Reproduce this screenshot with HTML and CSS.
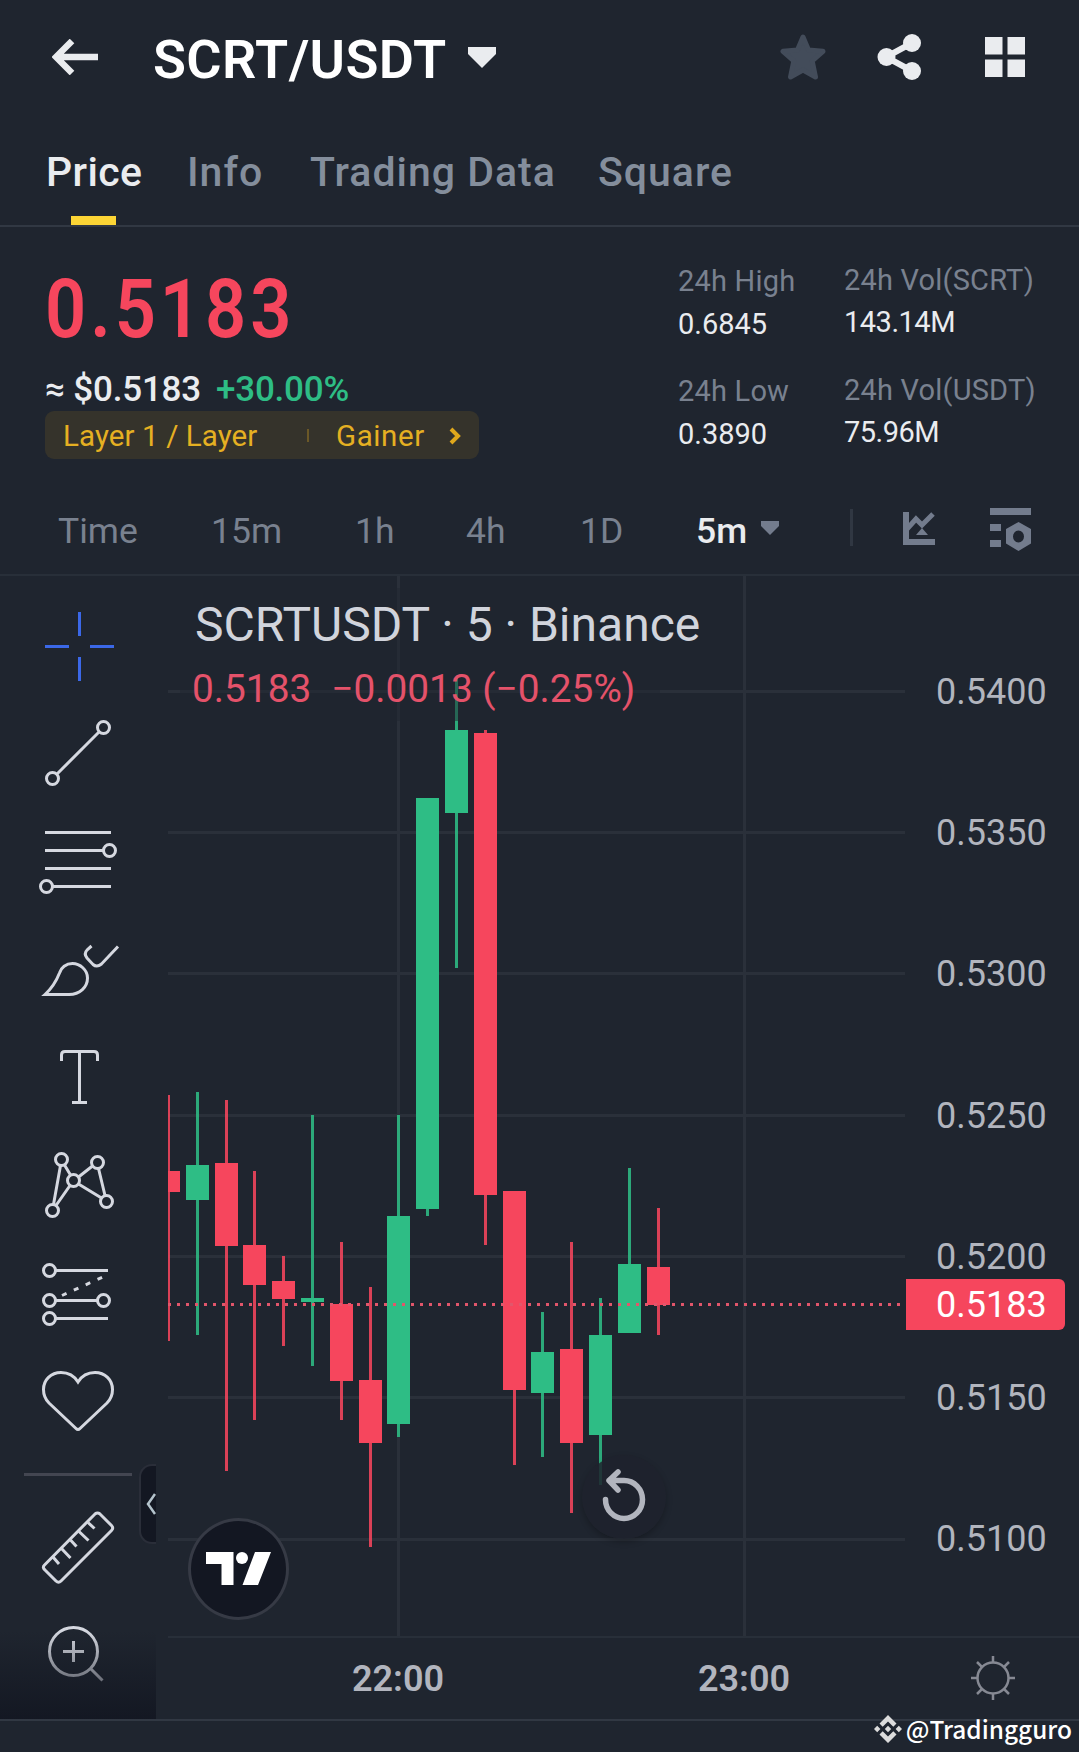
FILE: index.html
```html
<!DOCTYPE html>
<html lang="en">

<head>
    <meta charset="UTF-8">
    <meta name="viewport" content="width=device-width, initial-scale=1.0">
    <title>SCRT/USDT</title>
    <link rel="stylesheet" href="styles.css">
</head>

<body>
    <div class="app">
        <header class="header">
            <svg class="back" width="46" height="36" viewBox="0 0 46 36">
                <path d="M20 2L4 18L20 34M4 18H46" fill="none" stroke="#eaecef" stroke-width="6.5" />
            </svg>
            <h1 class="pair">SCRT/USDT</h1>
            <svg class="pair-caret" width="28" height="21" viewBox="0 0 28 21">
                <path d="M0 0H28V7L14 21L0 7Z" fill="#eaecef" />
            </svg>
            <div class="header-icons">
                <svg width="46" height="46" viewBox="0 0 46 46">
                    <path d="M23 3L28.5 16L43 17.3L32.2 27L35.5 43L23 36L10.5 43L13.8 27L3 17.3L17.5 16Z" fill="#434c5a"
                        stroke="#434c5a" stroke-width="5" stroke-linejoin="round" />
                </svg>
                <svg class="share" width="44" height="48" viewBox="0 0 44 48">
                    <path d="M35 10L9 24L35 38" fill="none" stroke="#eaecef" stroke-width="6" />
                    <circle cx="35" cy="10" r="9" fill="#eaecef" />
                    <circle cx="9.5" cy="24" r="9" fill="#eaecef" />
                    <circle cx="35" cy="38" r="9" fill="#eaecef" />
                </svg>
                <svg class="apps" width="40" height="40" viewBox="0 0 40 40">
                    <path d="M0 0H17.5V17.5H0ZM22.5 0H40V17.5H22.5ZM0 22.5H17.5V40H0ZM22.5 22.5H40V40H22.5Z"
                        fill="#eaecef" />
                </svg>
            </div>
        </header>

        <nav class="tabs">
            <a class="tab active">Price</a>
            <a class="tab">Info</a>
            <a class="tab">Trading Data</a>
            <a class="tab">Square</a>
        </nav>

        <section class="summary">
            <div class="quote">
                <div class="last-price">0.5183</div>
                <div class="quote-row"><span>≈ $0.5183</span><span class="up">+30.00%</span></div>
                <div class="tags">
                    <span class="tag-layer">Layer 1 / Layer</span>
                    <i class="tag-line"></i>
                    <span class="tag-gainer">Gainer</span>
                    <svg width="12" height="18" viewBox="0 0 12 18">
                        <path d="M2 2L9 9L2 16" fill="none" stroke="#e0a81c" stroke-width="4" />
                    </svg>
                </div>
            </div>
            <dl class="stats">
                <dt>24h High</dt>
                <dd>0.6845</dd>
                <dt>24h Low</dt>
                <dd>0.3890</dd>
            </dl>
            <dl class="stats volume">
                <dt>24h Vol(SCRT)</dt>
                <dd>143.14M</dd>
                <dt>24h Vol(USDT)</dt>
                <dd>75.96M</dd>
            </dl>
        </section>

        <div class="intervals">
            <span>Time</span>
            <span>15m</span>
            <span>1h</span>
            <span>4h</span>
            <span>1D</span>
            <span class="selected">5m</span>
            <svg class="interval-caret" width="18" height="14" viewBox="0 0 18 14">
                <path d="M0 0H18V5L9 14L0 5Z" fill="#737c8d" />
            </svg>
            <i class="interval-line"></i>
            <svg class="chart-icon" width="32" height="33" viewBox="0 0 32 33">
                <path d="M0 0H6V27H32V33H0Z" fill="#737c8d" />
                <path d="M4 17L13 7L19 13L30 2" fill="none" stroke="#737c8d" stroke-width="5" />
                <path d="M19 16L25 23H13Z" fill="#737c8d" />
            </svg>
            <svg class="settings-icon" width="41" height="43" viewBox="0 0 41 43">
                <path d="M0 0H41V7H0ZM0 16H11V23H0ZM0 32H11V39H0Z" fill="#737c8d" />
                <path fill-rule="evenodd"
                    d="M28.5 14L41 21V35.5L28.5 43L16 35.5V21ZM28.5 22.5A5.5 6 0 1 0 28.5 34.5A5.5 6 0 1 0 28.5 22.5Z"
                    fill="#737c8d" />
            </svg>
        </div>

        <main class="chart">
            <aside class="toolbar">
                <svg class="tool crosshair" viewBox="0 0 156 107">
                    <path d="M79.5 19V43M79.5 64V88M45 53.5H69M90 53.5H114" />
                </svg>
                <svg class="tool" viewBox="0 0 156 107">
                    <path d="M57 74L99 32" />
                    <circle cx="103.5" cy="27.5" r="6" />
                    <circle cx="52.5" cy="78.5" r="6" />
                </svg>
                <svg class="tool" viewBox="0 0 156 107">
                    <path d="M45 25.5H111M45 43.5H103M45 61.5H111M53 79.5H111" />
                    <circle cx="109.5" cy="43.5" r="6" />
                    <circle cx="46.5" cy="79.5" r="6" />
                </svg>
                <svg class="tool" viewBox="0 0 156 107">
                    <path
                        d="M45 80.5H69C80 80.5 87.5 73 87.5 64C87.5 56 80 49.5 72.5 49.5C66 49.5 61 53.5 59.5 59C56 68 51 75 45 80.5Z" />
                    <path d="M91.5 32L87.5 35.5C85 38 84.5 41 87 44L93 50.5C96 53 99 52 101.5 50L118 32.5" />
                </svg>
                <svg class="tool" viewBox="0 0 156 107">
                    <path d="M61.5 40V34Q61.5 30.5 65 30.5H94Q97.5 30.5 97.5 34V40M79.5 30.5V81.5M72 81.5H87" />
                </svg>
                <svg class="tool" viewBox="0 0 156 107">
                    <path
                        d="M60.5 37.5L53.5 76.5M64.5 37L70.5 47M70 57.5L56 77.5M78.5 49L92.5 38M78.5 56L101.5 70M98.5 40.5L105 67.5" />
                    <circle cx="61.5" cy="31.5" r="6" />
                    <circle cx="97.5" cy="34.5" r="6" />
                    <circle cx="73.5" cy="52.5" r="6" />
                    <circle cx="106.5" cy="73.5" r="6" />
                    <circle cx="52.5" cy="82.5" r="6" />
                </svg>
                <svg class="tool" viewBox="0 0 156 107">
                    <path d="M56 35.5H108M56 65.5H97M56 83.5H108" />
                    <path d="M62 60.5L104 41.5" stroke-dasharray="5 8" />
                    <circle cx="49.5" cy="35.5" r="6" />
                    <circle cx="49.5" cy="65.5" r="6" />
                    <circle cx="103.5" cy="65.5" r="6" />
                    <circle cx="49.5" cy="83.5" r="6" />
                </svg>
                <svg class="tool" viewBox="0 0 156 107">
                    <path
                        d="M78 40C74 33.5 68 30.5 61 30.5C51 30.5 43.5 38 43.5 47.5C43.5 53.5 45.5 57.5 49 61L76 86.5Q78 88.5 80 86.5L107 61C110.5 57.5 112.5 53.5 112.5 47.5C112.5 38 105 30.5 95 30.5C88 30.5 82 33.5 78 40Z" />
                </svg>
                <i class="tool-line"></i>
                <svg class="tool" viewBox="0 0 156 107">
                    <path
                        d="M95 20Q97.5 18 100 20L111.5 31.5Q114 34 111.5 36.5L61 87Q58.5 89.5 56 87L45 76Q42 73.5 44.5 71Z" />
                    <path
                        d="M53 63L59 70M61.5 54.5L70.5 64M70.5 46L76.5 52.5M79 37.5L88.5 46.5M88 28.5L94.5 34.5" />
                </svg>
                <svg class="tool" viewBox="0 0 156 107">
                    <circle cx="73.5" cy="50.5" r="24" />
                    <path d="M73.5 40V61M63 50.5H84M91 68L102.5 79.5" />
                </svg>
                <div class="toolbar-fade"></div>
                <div class="collapse">
                    <svg width="10" height="22" viewBox="0 0 10 22">
                        <path d="M9 1L2 11L9 21" fill="none" stroke="#b4c3cc" stroke-width="2.5" />
                    </svg>
                </div>
            </aside>

            <div class="plot">
                <svg width="737" height="1060" viewBox="168 576 737 1060">
                    <g class="grid-lines">
                        <path
                            d="M168 691.5H905M168 832.5H905M168 973.5H905M168 1115.5H905M168 1256.5H905M168 1397.5H905M168 1539.5H905" />
                        <path d="M398.5 576V1636M744.5 576V1636" />
                    </g>
                    <g id="candles"></g>
                    <path class="price-line" d="M168 1304.5H905" />
                </svg>
                <div class="legend">
                    <div class="legend-title">SCRTUSDT · 5 · Binance</div>
                    <div class="legend-values"><span>0.5183</span><span>−0.0013 (−0.25%)</span></div>
                </div>
                <div class="tv-logo">
                    <svg width="66" height="34" viewBox="0 0 66 34">
                        <path d="M0 0H27.5V33H15.5V12H0ZM49 0H65L52 33H36.5Z" fill="#fff" />
                        <circle cx="36" cy="6" r="6" fill="#fff" />
                    </svg>
                </div>
                <div class="reset">
                    <svg width="48" height="56" viewBox="0 0 48 56">
                        <path d="M5.5 31.5A18.5 19 0 1 0 24 12.5H9M18 4L9 12.5L18 22" fill="none" stroke="#b2b5be"
                            stroke-width="5.5" stroke-linecap="round" stroke-linejoin="round" />
                    </svg>
                </div>
            </div>

            <div class="price-axis">
                <span>0.5400</span>
                <span>0.5350</span>
                <span>0.5300</span>
                <span>0.5250</span>
                <span>0.5200</span>
                <span>0.5150</span>
                <span>0.5100</span>
                <div class="price-tag">0.5183</div>
            </div>

            <div class="time-axis">
                <span>22:00</span>
                <span>23:00</span>
            </div>
            <div class="axis-settings">
                <svg width="46" height="46" viewBox="0 0 46 46">
                    <g fill="none" stroke="#868993" stroke-width="2.5">
                        <circle cx="23" cy="23" r="15.5" />
                        <path
                            d="M23 1V7.5M23 38.5V45M1 23H7.5M38.5 23H45M7 7L12 12M34 34L39 39M39 7L34 12M7 39L12 34" />
                    </g>
                </svg>
            </div>
        </main>

        <div class="watermark">
            <svg width="28" height="28" viewBox="0 0 28 28">
                <g fill="#dcdcdc">
                    <path d="M14 0L22.5 8.5L19.3 11.7L14 6.4L8.7 11.7L5.5 8.5Z" />
                    <path d="M14 28L22.5 19.5L19.3 16.3L14 21.6L8.7 16.3L5.5 19.5Z" />
                    <path
                        d="M3.2 10.8L6.4 14L3.2 17.2L0 14ZM24.8 10.8L28 14L24.8 17.2L21.6 14ZM14 10.8L17.2 14L14 17.2L10.8 14Z" />
                </g>
            </svg>
            <span>@Tradingguro</span>
        </div>
    </div>
    <script>
        // x, wick top, body top, body bottom, wick bottom, direction
        const candles = [
            [157, 1095, 1171, 1192, 1341, "down"],
            [186, 1092, 1165, 1200, 1335, "up"],
            [215, 1100, 1163, 1246, 1471, "down"],
            [243, 1171, 1245, 1285, 1420, "down"],
            [272, 1256, 1281, 1299, 1346, "down"],
            [301, 1115, 1298, 1302, 1366, "up"],
            [330, 1242, 1304, 1381, 1420, "down"],
            [359, 1287, 1380, 1443, 1547, "down"],
            [387, 1115, 1216, 1424, 1437, "up"],
            [416, 798, 798, 1209, 1216, "up"],
            [445, 677, 730, 813, 968, "up"],
            [474, 730, 733, 1195, 1245, "down"],
            [503, 1191, 1191, 1390, 1465, "down"],
            [531, 1312, 1352, 1393, 1457, "up"],
            [560, 1242, 1349, 1443, 1513, "down"],
            [589, 1298, 1335, 1435, 1485, "up"],
            [618, 1168, 1264, 1333, 1333, "up"],
            [647, 1208, 1267, 1305, 1335, "down"]
        ];

        const group = document.getElementById("candles");
        function addRect(x, y, width, height, className) {
            const rect = document.createElementNS("http://www.w3.org/2000/svg", "rect");
            rect.setAttribute("x", x);
            rect.setAttribute("y", y);
            rect.setAttribute("width", width);
            rect.setAttribute("height", height);
            rect.setAttribute("class", className);
            group.appendChild(rect);
        }
        candles.forEach(function (c) {
            addRect(c[0] + 10, c[1], 3, c[4] - c[1], "wick " + c[5]);
            addRect(c[0], c[2], 23, c[3] - c[2], c[5]);
        });
    </script>
</body>

</html>
```
FILE: styles.css
```css
* {
    margin: 0;
    padding: 0;
    box-sizing: border-box;
}

body {
    background: #1f252f;
    font-family: Roboto, "Liberation Sans", sans-serif;
    color: #eaecef;
}

svg {
    display: block;
    flex-shrink: 0;
}

.app {
    position: relative;
    width: 1079px;
    height: 1752px;
    overflow: hidden;
    white-space: nowrap;
}

/* header */
.header {
    display: flex;
    align-items: center;
    height: 118px;
    padding: 0 54px 0 52px;
}

.back {
    margin-bottom: 4px;
}

.pair {
    width: 315px;
    margin-left: 55px;
    padding-top: 2px;
    font-size: 54px;
    font-weight: 600;
    line-height: 60px;
    letter-spacing: 0.4px;
    color: #fff;
}

.pair-caret {
    margin-bottom: 3px;
}

.header-icons {
    display: flex;
    align-items: center;
    margin-left: auto;
    margin-bottom: 4px;
}

.share {
    margin-left: 51px;
}

.apps {
    margin-left: 64px;
}

/* tabs */
.tabs {
    display: grid;
    grid-template-columns: 96px 78px 243px 136px;
    column-gap: 45px;
    height: 109px;
    padding: 34px 46px 0;
    border-bottom: 2px solid #313843;
}

.tab {
    position: relative;
    font-size: 41px;
    font-weight: 500;
    line-height: 41px;
    letter-spacing: 1px;
    color: #848e9c;
}

.tab.active {
    letter-spacing: 0.4px;
    color: #eaecef;
}

.tab.active::after {
    content: "";
    position: absolute;
    left: 25px;
    bottom: 0;
    width: 45px;
    height: 9px;
    background: #fcd535;
}

/* price summary */
.summary {
    display: grid;
    grid-template-columns: 633px 166px 1fr;
    height: 259px;
    padding-left: 45px;
}

.quote {
    padding-top: 41px;
}

.last-price {
    font-size: 82px;
    font-weight: 600;
    line-height: 82px;
    letter-spacing: 4.5px;
    color: #f6465d;
    transform: scaleX(0.88);
    transform-origin: left;
}

.quote-row {
    display: flex;
    gap: 15px;
    margin-top: 20px;
    font-size: 35px;
    font-weight: 500;
    line-height: 40px;
    letter-spacing: -0.2px;
}

.up {
    color: #2ebd85;
}

.tags {
    display: flex;
    align-items: center;
    width: 434px;
    height: 48px;
    margin-top: 1px;
    padding: 1px 0 0 18px;
    border-radius: 9px;
    background: #35332b;
    font-size: 29.5px;
    letter-spacing: 0.1px;
    color: #e5b022;
}

.tag-layer {
    width: 244px;
}

.tag-line {
    width: 2px;
    height: 13px;
    margin-right: 27px;
    background: #6b5827;
}

.tag-gainer {
    width: 113px;
    letter-spacing: 0.6px;
}

.stats {
    padding-top: 39px;
    font-size: 29px;
    line-height: 30px;
}

.stats dt {
    margin-bottom: 13px;
    letter-spacing: 0.2px;
    color: #79818f;
}

.stats dd {
    margin-bottom: 37px;
}

.stats.volume {
    padding-top: 38px;
}

.stats.volume dt {
    margin-bottom: 12px;
}

.stats.volume dd {
    margin-bottom: 38px;
    letter-spacing: -0.5px;
}

/* intervals */
.intervals {
    display: grid;
    grid-template-columns: 153px 144px 111px 114px 116px 65px 89px 53px 87px 1fr;
    align-items: center;
    height: 90px;
    padding: 2px 0 0 58px;
    border-bottom: 2px solid #282f39;
    font-size: 35.5px;
    color: #79818f;
}

.intervals .selected {
    font-weight: 500;
    color: #eaecef;
}

.interval-caret,
.chart-icon {
    margin-bottom: 6px;
}

.interval-line {
    width: 3px;
    height: 37px;
    margin-bottom: 8px;
    background: #303742;
}

.settings-icon {
    margin-bottom: 4px;
}

/* chart */
.chart {
    display: grid;
    grid-template-columns: 168px 737px 174px;
    grid-template-rows: 1060px 83px;
    height: 1145px;
    border-bottom: 2px solid #313843;
}

.toolbar {
    grid-row: span 2;
    position: relative;
    display: flex;
    flex-direction: column;
    width: 156px;
    padding-top: 17px;
}

.tool {
    width: 156px;
    height: 107px;
    fill: none;
    stroke: #d5d8e0;
    stroke-width: 3;
}

.tool.crosshair {
    stroke: #3b68e8;
}

.tool-line {
    width: 108px;
    height: 3px;
    margin: 24px 0 18px 24px;
    background: #434651;
}

.toolbar-fade {
    position: absolute;
    left: 0;
    bottom: 0;
    width: 156px;
    height: 88px;
    background: linear-gradient(rgba(19, 23, 34, 0), rgba(19, 23, 34, 0.95));
}

.collapse {
    position: absolute;
    left: 139px;
    top: 888px;
    display: flex;
    align-items: center;
    width: 17px;
    height: 80px;
    padding-left: 5px;
    border: 2px solid #2a2e39;
    border-right: 0;
    border-radius: 13px 0 0 13px;
    background: #131722;
    overflow: hidden;
}

.plot {
    position: relative;
}

.grid-lines {
    stroke: #2a303a;
    stroke-width: 3;
}

#candles .up {
    fill: #2ebd85;
}

#candles .down {
    fill: #f6465d;
}

#candles .wick {
    opacity: 0.87;
}

.price-line {
    stroke: #e2566b;
    stroke-width: 3;
    stroke-dasharray: 3 6;
}

.legend {
    position: absolute;
    left: 12px;
    top: 12px;
    width: 480px;
    height: 133px;
    padding: 12px 0 0 15px;
    background: rgba(31, 37, 47, 0.5);
}

.legend-title {
    font-size: 48px;
    line-height: 49px;
    color: #d1d4dc;
}

.legend-values {
    display: flex;
    gap: 20px;
    margin-top: 20px;
    margin-left: -3px;
    font-size: 38.8px;
    line-height: 40px;
    color: #e4526a;
}

.tv-logo {
    position: absolute;
    left: 20px;
    top: 942px;
    display: flex;
    align-items: center;
    justify-content: center;
    width: 101px;
    height: 102px;
    padding-left: 1px;
    border: 3px solid #363a45;
    border-radius: 50%;
    background: #131722;
}

.reset {
    position: absolute;
    left: 414px;
    top: 879px;
    display: flex;
    align-items: center;
    justify-content: center;
    width: 84px;
    height: 84px;
    padding-bottom: 3px;
    border-radius: 50%;
    background: rgba(30, 34, 45, 0.85);
    box-shadow: 0 3px 6px rgba(0, 0, 0, 0.25);
}

.price-axis {
    position: relative;
    padding: 45px 0 0 31px;
    font-size: 36px;
    color: #b2b5be;
}

.price-axis span {
    display: flex;
    align-items: center;
    height: 141.3px;
}

.price-tag {
    position: absolute;
    left: 1px;
    top: 703px;
    width: 159px;
    height: 51px;
    padding-left: 30px;
    border-radius: 0 6px 6px 0;
    background: #f6465d;
    line-height: 53px;
    color: #fff;
}

.time-axis {
    display: grid;
    grid-template-columns: 460px 232px;
    align-items: center;
    justify-items: center;
    border-top: 2px solid #282f39;
    font-size: 36px;
    font-weight: 600;
    color: #b2b5be;
}

.axis-settings {
    padding: 17px 0 0 65px;
    border-top: 2px solid #282f39;
}

.watermark {
    position: absolute;
    right: 7px;
    bottom: 5px;
    display: flex;
    align-items: center;
    gap: 4px;
    font-family: "Noto Sans CJK SC", "Noto Sans", sans-serif;
    font-size: 24.4px;
    font-weight: 500;
    line-height: 36px;
    color: #fff;
}
```
